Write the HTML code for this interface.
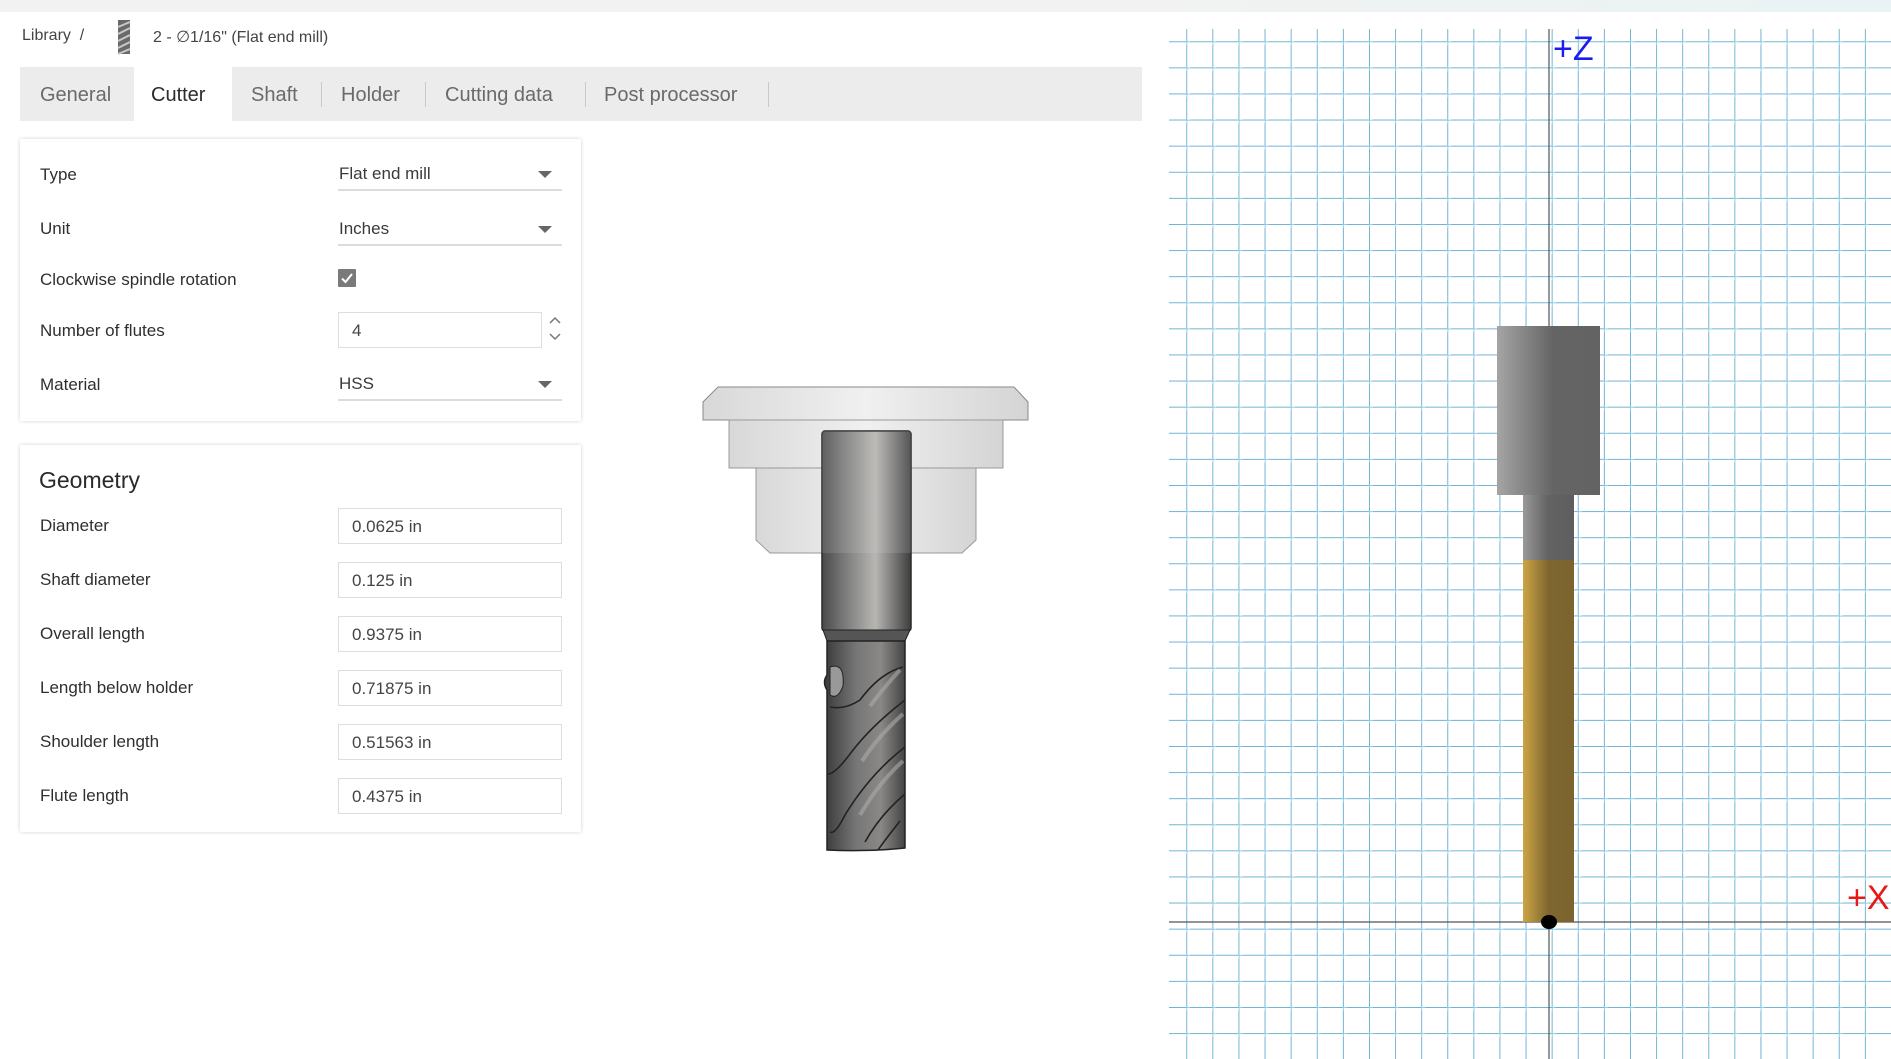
<!DOCTYPE html>
<html><head><meta charset="utf-8"><style>
*{margin:0;padding:0;box-sizing:border-box}
body{width:1891px;height:1059px;background:#fff;font-family:"Liberation Sans",sans-serif;color:#3c3c3c;position:relative;overflow:hidden}
.abs{position:absolute}
.topbar{left:0;top:0;width:1891px;height:12px;background:linear-gradient(90deg,#f2f2f2 0,#f2f2f2 60%,#e9f3f3 100%)}
.crumb{top:27px;font-size:16px;color:#444}
.tabs{left:20px;top:67px;width:1122px;height:54px;background:#ececec}
.tab{position:absolute;top:1px;height:54px;line-height:54px;font-size:20px;color:#6a6a6a}
.sep{position:absolute;top:15px;width:1px;height:25px;background:#c8c8c8}
.card{background:#fff;box-shadow:0 0 4px rgba(0,0,0,.18);border-radius:2px}
.lbl{position:absolute;left:40px;font-size:17px;color:#2f2f2f;transform:translateY(-50%)}
.dd{position:absolute;left:338px;width:224px;height:34px;border-bottom:2px solid #dcdcdc;font-size:17px;color:#3a3a3a}
.dd span{position:absolute;left:1px;top:7px}
.dd i{position:absolute;right:10px;top:14px;width:0;height:0;border-left:7px solid transparent;border-right:7px solid transparent;border-top:7px solid #666}
.inp{position:absolute;left:338px;width:224px;height:36px;border:1px solid #dedede;font-size:17px;color:#444;padding:8px 0 0 13px}
</style></head><body>
<div class="abs topbar"></div>
<div class="abs crumb" style="left:22px">Library&nbsp;&nbsp;/</div>
<svg class="abs" style="left:115px;top:19px" width="18" height="36" viewBox="0 0 18 36">
<rect x="3" y="1" width="12" height="34" fill="#6a6a6a"/>
<path d="M3 8 L15 3 M3 15 L15 9 M3 22 L15 16 M3 29 L15 23 M3 35 L15 30" stroke="#c8c8c8" stroke-width="2"/>
</svg>
<div class="abs crumb" style="left:153px">2 - ∅1/16" (Flat end mill)</div>

<div class="abs tabs">
 <div class="tab" style="left:20px">General</div>
 <div class="tab" style="left:114px;top:0;width:98px;background:#fff;color:#2b2b2b;padding-left:17px;line-height:56px">Cutter</div>
 <div class="tab" style="left:231px">Shaft</div>
 <div class="sep" style="left:301px"></div>
 <div class="tab" style="left:321px">Holder</div>
 <div class="sep" style="left:405px"></div>
 <div class="tab" style="left:425px">Cutting data</div>
 <div class="sep" style="left:565px"></div>
 <div class="tab" style="left:584px">Post processor</div>
 <div class="sep" style="left:748px"></div>
</div>

<div class="abs card" style="left:20px;top:139px;width:561px;height:282px"></div>
<div class="lbl" style="top:175px">Type</div>
<div class="dd" style="top:157px"><span>Flat end mill</span><i></i></div>
<div class="lbl" style="top:229px">Unit</div>
<div class="dd" style="top:212px"><span>Inches</span><i></i></div>
<div class="lbl" style="top:280px">Clockwise spindle rotation</div>
<svg class="abs" style="left:338px;top:269px" width="18" height="18"><rect width="18" height="18" fill="#7a7a7a" rx="1"/><path d="M4 9.5 L7.5 13 L14 5" stroke="#fff" stroke-width="2" fill="none"/></svg>
<div class="lbl" style="top:331px">Number of flutes</div>
<div class="inp" style="top:312px;width:204px">4</div>
<svg class="abs" style="left:548px;top:315px" width="14" height="28"><path d="M2 8 L7 3 L12 8 M2 19 L7 24 L12 19" stroke="#777" stroke-width="1.5" fill="none"/></svg>
<div class="lbl" style="top:385px">Material</div>
<div class="dd" style="top:367px"><span>HSS</span><i></i></div>

<div class="abs card" style="left:20px;top:445px;width:561px;height:387px"></div>
<div class="abs" style="left:39px;top:467px;font-size:23px;color:#2a2a2a">Geometry</div>
<div class="lbl" style="top:526px">Diameter</div><div class="inp" style="top:508px">0.0625 in</div>
<div class="lbl" style="top:580px">Shaft diameter</div><div class="inp" style="top:562px">0.125 in</div>
<div class="lbl" style="top:634px">Overall length</div><div class="inp" style="top:616px">0.9375 in</div>
<div class="lbl" style="top:688px">Length below holder</div><div class="inp" style="top:670px">0.71875 in</div>
<div class="lbl" style="top:742px">Shoulder length</div><div class="inp" style="top:724px">0.51563 in</div>
<div class="lbl" style="top:796px">Flute length</div><div class="inp" style="top:778px">0.4375 in</div>

<!-- tool illustration -->
<svg class="abs" style="left:0;top:0" width="1150" height="1059">
<defs>
<linearGradient id="hg" x1="0" x2="1"><stop offset="0" stop-color="#d8d8d8"/><stop offset=".5" stop-color="#f0f0f0"/><stop offset="1" stop-color="#d4d4d4"/></linearGradient>
<linearGradient id="sg" x1="0" x2="1"><stop offset="0" stop-color="#4a4a4a"/><stop offset=".25" stop-color="#7a7a7a"/><stop offset=".6" stop-color="#b8b6b3"/><stop offset="1" stop-color="#3e3e3e"/></linearGradient>
<linearGradient id="fg" x1="0" x2="1"><stop offset="0" stop-color="#3a3a3a"/><stop offset=".4" stop-color="#777"/><stop offset=".7" stop-color="#8a8886"/><stop offset="1" stop-color="#444"/></linearGradient>
</defs>
<path d="M718 387 L1014 387 L1028 402 L1028 420 L703 420 L703 402 Z" fill="url(#hg)" stroke="#8a8a8a" stroke-width="1"/>
<rect x="729" y="420" width="274" height="48" fill="url(#hg)" stroke="#999" stroke-width="1"/>
<path d="M756 468 L976 468 L976 540 L962 553 L770 553 L756 540 Z" fill="url(#hg)" stroke="#999" stroke-width="1"/>
<rect x="822" y="431" width="89" height="200" rx="3" fill="url(#sg)" stroke="#2a2a2a" stroke-width="1.5"/>
<rect x="822" y="431" width="89" height="122" fill="#ddd" opacity=".15"/>
<path d="M823 630 L910 630 L905 641 L827 641 Z" fill="#555" stroke="#222"/>
<path d="M827 641 L905 641 L905 848 Q866 852 827 850 L827 690 Q822 682 827 675 Z" fill="url(#fg)" stroke="#222" stroke-width="1.5"/>
<path d="M830 667 Q845 662 843 686 Q838 700 830 695 Z" fill="#999" stroke="#222"/>
<path d="M903 667 Q880 673 860 700 Q845 710 830 707 M905 700 Q870 727 850 754 Q835 774 828 774 M905 747 Q870 774 845 815 Q835 835 830 832 M905 794 Q880 815 865 842 M900 821 Q885 840 878 850" stroke="#222" stroke-width="1.6" fill="none"/>
<path d="M900 670 Q885 686 870 706 M903 714 Q880 734 862 761 M903 761 Q880 781 860 815" stroke="#aaa" stroke-width="4" fill="none" opacity=".6"/>
</svg>

<!-- grid view -->
<svg class="abs" style="left:1169px;top:29px" width="722" height="1030">
<defs>
<pattern id="gp" x="17.3" y="12.3" width="26.1" height="26.1" patternUnits="userSpaceOnUse">
<path d="M0 0 V26.1 M0 0 H26.1" stroke="#58a9cf" stroke-width="1.7" fill="none"/>
<path d="M-4 0 H4 M0 -4 V4" stroke="#a8d8ea" stroke-width="1" fill="none"/>
</pattern>
<linearGradient id="gh" x1="0" x2="1"><stop offset="0" stop-color="#a5a5a5"/><stop offset=".55" stop-color="#646464"/><stop offset="1" stop-color="#636363"/></linearGradient>
<linearGradient id="gs" x1="0" x2="1"><stop offset="0" stop-color="#999"/><stop offset=".5" stop-color="#626262"/><stop offset="1" stop-color="#5e5e5e"/></linearGradient>
<linearGradient id="gg" x1="0" x2="1"><stop offset="0" stop-color="#cca544"/><stop offset=".5" stop-color="#7f6630"/><stop offset="1" stop-color="#7c642f"/></linearGradient>
</defs>
<rect width="722" height="1030" fill="url(#gp)"/>
<line x1="380" y1="0" x2="380" y2="1030" stroke="#555" stroke-width="1.2"/>
<line x1="0" y1="893" x2="722" y2="893" stroke="#555" stroke-width="1.2"/>
<rect x="328" y="297" width="103" height="169" fill="url(#gh)"/>
<rect x="354" y="466" width="51" height="65" fill="url(#gs)"/>
<rect x="354" y="531" width="51" height="362" fill="url(#gg)"/>
<ellipse cx="380" cy="893" rx="8" ry="7" fill="#000"/>
<text x="384" y="31" font-family="Liberation Sans,sans-serif" font-size="34" fill="#1c1cf0">+Z</text>
<text x="678" y="880" font-family="Liberation Sans,sans-serif" font-size="34" fill="#e81818">+X</text>
</svg>
</body></html>
